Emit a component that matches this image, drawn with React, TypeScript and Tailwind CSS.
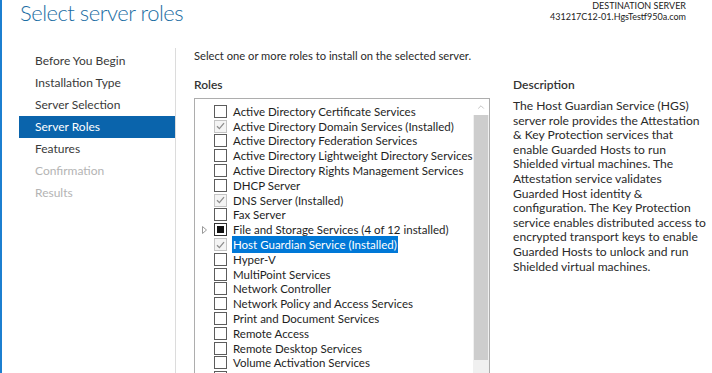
import { ChevronUp } from "lucide-react";

type Role = {
  name: string;
  state?: "checked" | "partial";
  expandable?: boolean;
  selected?: boolean;
};

const steps = [
  { label: "Before You Begin" },
  { label: "Installation Type" },
  { label: "Server Selection" },
  { label: "Server Roles", active: true },
  { label: "Features" },
  { label: "Confirmation", disabled: true },
  { label: "Results", disabled: true },
];

const roles: Role[] = [
  { name: "Active Directory Certificate Services" },
  { name: "Active Directory Domain Services (Installed)", state: "checked" },
  { name: "Active Directory Federation Services" },
  { name: "Active Directory Lightweight Directory Services" },
  { name: "Active Directory Rights Management Services" },
  { name: "DHCP Server" },
  { name: "DNS Server (Installed)", state: "checked" },
  { name: "Fax Server" },
  { name: "File and Storage Services (4 of 12 installed)", state: "partial", expandable: true },
  { name: "Host Guardian Service (Installed)", state: "checked", selected: true },
  { name: "Hyper-V" },
  { name: "MultiPoint Services" },
  { name: "Network Controller" },
  { name: "Network Policy and Access Services" },
  { name: "Print and Document Services" },
  { name: "Remote Access" },
  { name: "Remote Desktop Services" },
  { name: "Volume Activation Services" },
  { name: "Web Server (IIS)" },
];

// wrapped the way the wizard wraps it
const description = [
  "The Host Guardian Service (HGS)",
  "server role provides the Attestation",
  "& Key Protection services that",
  "enable Guarded Hosts to run",
  "Shielded virtual machines. The",
  "Attestation service validates",
  "Guarded Host identity &",
  "configuration. The Key Protection",
  "service enables distributed access to",
  "encrypted transport keys to enable",
  "Guarded Hosts to unlock and run",
  "Shielded virtual machines.",
];

function Box({ state }: { state?: Role["state"] }) {
  if (state === "checked") {
    return (
      <span className="w-[13px] h-[13px] border border-[#c4c4c4] bg-[#f4f4f4] flex items-center justify-center shrink-0">
        <svg width="9" height="8" viewBox="0 0 9 8" fill="none">
          <path d="M1 4.2 L3.4 6.6 L8 1.2" stroke="#8d8d8d" strokeWidth="1.3" />
        </svg>
      </span>
    );
  }
  if (state === "partial") {
    return (
      <span className="w-[13px] h-[13px] border border-[#333] bg-white flex items-center justify-center shrink-0">
        <span className="w-[7px] h-[7px] bg-[#111]" />
      </span>
    );
  }
  return <span className="w-[13px] h-[13px] border border-[#5c5c5c] bg-white shrink-0" />;
}

export default function App() {
  return (
    <div
      className="w-[712px] h-[373px] overflow-hidden bg-white border-l-2 border-[#1c7fd0] flex flex-col text-[#1e1e1e]"
      style={{ fontFamily: "Lato, 'Noto Sans', sans-serif" }}
    >
      <div className="h-[48px] flex justify-between shrink-0">
        <h1 className="pl-[18px] -mt-[4px] text-[22px] font-light text-[#1c6ea4] tracking-[-0.5px]">
          Select server roles
        </h1>
        <div className="pr-[26px] text-right text-[9px] leading-[11px] text-[#222]">
          <div>DESTINATION SERVER</div>
          <div>431217C12-01.HgsTestf950a.com</div>
        </div>
      </div>

      <div className="flex flex-1 min-h-0">
        <nav className="w-[174px] shrink-0 border-r border-[#dcdcdc] pl-[17px] pt-[2px]">
          {steps.map((s) => (
            <div
              key={s.label}
              className={
                "h-[22px] flex items-center pl-[16px] text-[12px] " +
                (s.active
                  ? "bg-[#0a64ac] text-white"
                  : s.disabled
                  ? "text-[#b4b4b4]"
                  : "text-[#3a3a3a]")
              }
            >
              {s.label}
            </div>
          ))}
        </nav>

        <div className="flex-1 min-w-0 pl-[18px] pt-[1px] flex flex-col">
          <div className="text-[11.2px] leading-[14px] text-[#2a2a2a]">
            Select one or more roles to install on the selected server.
          </div>
          <div className="flex flex-1 min-h-0 mt-[13px] gap-[23px]">
            <div className="w-[296px] shrink-0 flex flex-col">
              <div className="text-[12px] font-semibold text-[#333] h-[22px]">Roles</div>
              <div className="flex-1 min-h-0 border border-[#adadad] border-b-0 flex">
                <div className="flex-1 min-w-0 pt-[5px] overflow-hidden">
                  {roles.map((r) => (
                    <div key={r.name} className="h-[14.8px] flex items-center text-[11.5px] whitespace-nowrap">
                      <span className="w-[19px] pl-[7px] shrink-0 flex items-center">
                        {r.expandable && (
                          <svg width="5" height="8" viewBox="0 0 5 8">
                            <path d="M0.5 0.5 L4.5 4 L0.5 7.5 Z" fill="none" stroke="#9a9a9a" strokeWidth="1" />
                          </svg>
                        )}
                      </span>
                      <Box state={r.state} />
                      <span className={"ml-[5px] px-[1px] " + (r.selected ? "bg-[#0078d7] text-white" : "")}>
                        {r.name}
                      </span>
                    </div>
                  ))}
                </div>
                <div className="w-[16px] shrink-0 flex flex-col bg-[#f0f0f0]">
                  <div className="h-[16px] flex items-center justify-center bg-white">
                    <ChevronUp size={10} strokeWidth={1.5} className="text-[#a0a0a0]" />
                  </div>
                  <div className="h-[245px] bg-[#cdcdcd] mx-[1px]" />
                  <div className="flex-1 bg-[#f0f0f0]" />
                </div>
              </div>
            </div>
            <div className="flex-1 min-w-0">
              <div className="text-[12px] font-semibold text-[#333] h-[22px]">Description</div>
              <div className="pt-[1px] text-[12.1px] leading-[14.6px] text-[#2a2a2a] whitespace-nowrap">
                {description.map((line) => (
                  <div key={line}>{line}</div>
                ))}
              </div>
            </div>
          </div>
        </div>
      </div>
    </div>
  );
}
